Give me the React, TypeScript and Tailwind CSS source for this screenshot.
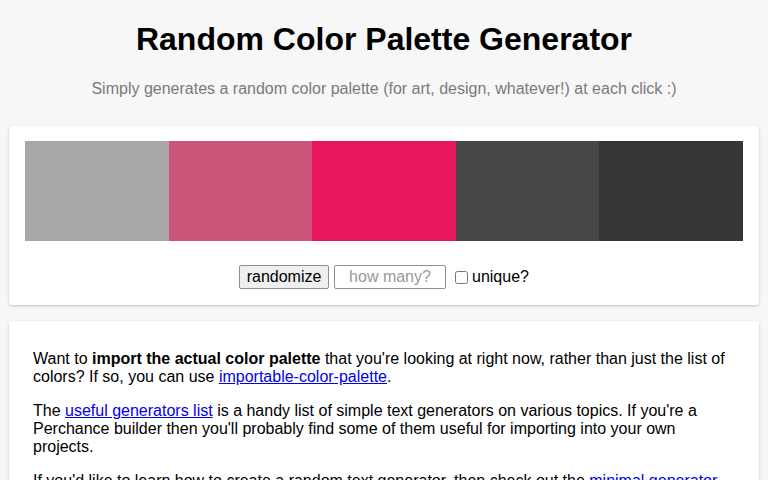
const colors = ["#a8a8a8", "#cc5479", "#e8175d", "#474747", "#363636"];

export default function App() {
  return (
    <div
      className="min-h-screen bg-[#f7f7f7] pb-10 text-black"
      style={{ fontFamily: '"Liberation Sans", Arial, sans-serif' }}
    >
      <h1 className="pt-[21px] text-center text-[32px] leading-[37px] font-bold">
        Random Color Palette Generator
      </h1>
      <p className="mt-[22px] text-center text-base leading-[18px] text-[#7a7a7a]">
        Simply generates a random color palette (for art, design, whatever!) at each click :)
      </p>

      {/* palette card */}
      <div className="mx-[9px] mt-[28px] rounded-[3px] bg-white px-4 pt-[15px] pb-4 shadow-[0_1px_3px_rgba(0,0,0,0.22)]">
        <div className="flex h-[100px]">
          {colors.map((c) => (
            <div key={c} className="flex-1" style={{ backgroundColor: c }} />
          ))}
        </div>
        <div className="mt-6 flex items-center justify-center text-base">
          <button
            type="button"
            className="h-6 w-[90px] rounded-[2px] border border-[#8f8f8f] bg-[#efefef] leading-none"
          >
            randomize
          </button>
          <input
            className="ml-[5px] h-6 w-[112px] rounded-[2px] border border-[#8f8f8f] bg-white px-1 text-center text-base outline-none placeholder:text-[#999]"
            placeholder="how many?"
          />
          <input type="checkbox" className="ml-[9px] h-[13px] w-[13px]" />
          <label className="ml-1">unique?</label>
        </div>
      </div>

      {/* info card */}
      <div className="mx-[9px] mt-4 rounded-[3px] bg-white px-6 pt-[29px] pb-6 text-base leading-[18px] shadow-[0_1px_3px_rgba(0,0,0,0.22)]">
        <p>
          Want to <b>import the actual color palette</b> that you're looking at right now, rather
          than just the list of colors? If so, you can use{" "}
          <a href="#" className="text-[#0000ee] underline">
            importable-color-palette
          </a>
          .
        </p>
        <p className="mt-4">
          The{" "}
          <a href="#" className="text-[#0000ee] underline">
            useful generators list
          </a>{" "}
          is a handy list of simple text generators on various topics. If you're a Perchance
          builder then you'll probably find some of them useful for importing into your own
          projects.
        </p>
        <p className="mt-4">
          If you'd like to learn how to create a random text generator, then check out the{" "}
          <a href="#" className="text-[#0000ee] underline">
            minimal generator
          </a>{" "}
          and the tutorial.
        </p>
      </div>
    </div>
  );
}
